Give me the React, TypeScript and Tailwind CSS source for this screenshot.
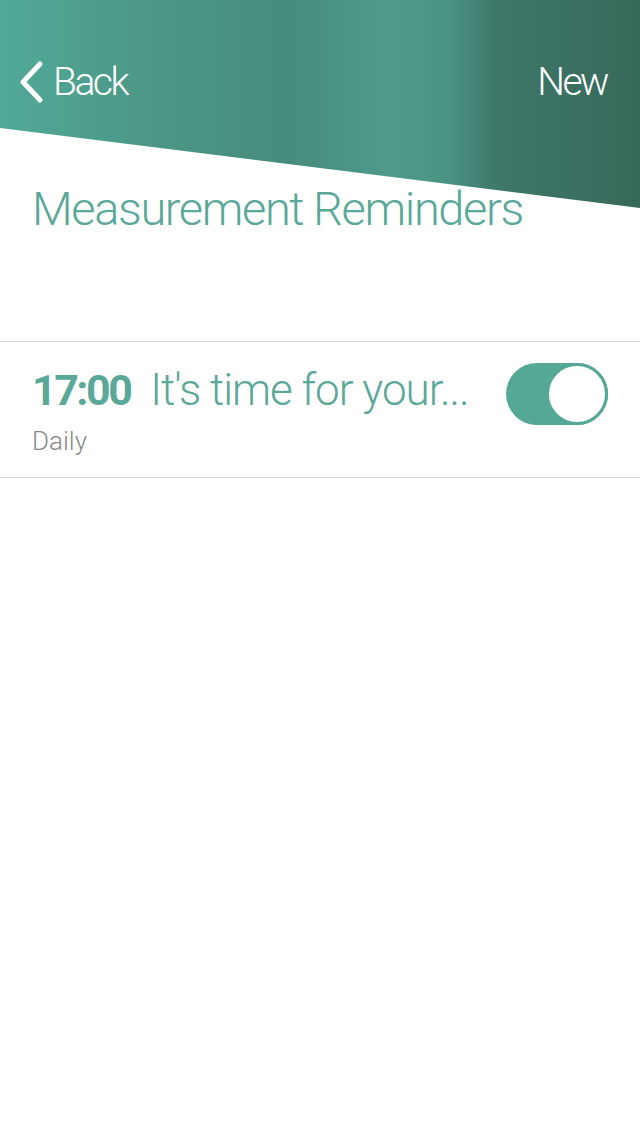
import React from "react";

const font = { fontFamily: "Roboto, 'Open Sans', sans-serif" };

function Toggle() {
  return (
    <div className="w-[102px] h-[62px] rounded-full bg-[#55a896] relative shrink-0">
      <div className="absolute right-0 top-0 w-[62px] h-[62px] rounded-full bg-white border-[3px] border-[#55a896]" />
    </div>
  );
}

export default function App() {
  return (
    <div className="relative w-full min-h-screen bg-white" style={font}>
      <div className="absolute top-0 left-0 w-full h-[208px] [clip-path:polygon(0_0,100%_0,100%_100%,0_61.5%)] bg-[linear-gradient(90deg,#52a998_0%,#4b9685_25%,#478b7c_45%,#4e9c8c_61%,#4a9282_70%,#3e7769_78%,#37695a_100%)]" />

      <div className="relative z-10 h-[164px] flex items-center justify-between pl-[18px] pr-[33px] text-white">
        <div className="flex items-center gap-[9px]">
          <svg width="26" height="44" viewBox="0 0 26 44" fill="none">
            <path d="M22 4 L5 22 L22 40" stroke="white" strokeWidth="5" strokeLinecap="round" strokeLinejoin="round" />
          </svg>
          <span className="text-[39px] font-light leading-none tracking-[-2.5px]">Back</span>
        </div>
        <span className="text-[39px] font-light leading-none tracking-[-2.5px]">New</span>
      </div>

      <h1 className="relative z-10 mt-[17px] px-[32px] text-[47px] font-light leading-[56px] text-[#5aa898] tracking-[-1.4px]">
        Measurement Reminders
      </h1>

      <div className="mt-[104px] border-y border-[#cfcfcf] h-[137px] flex items-start justify-between pl-[32px] pr-[32px] pt-[21px]">
        <div className="flex flex-col mt-[5px]">
          <div className="flex items-baseline gap-[20px] text-[#5aa898]">
            <span className="text-[43px] font-bold leading-none tracking-[-2.5px]">17:00</span>
            <span className="text-[44px] font-light leading-none tracking-[-1px]">It's time for your...</span>
          </div>
          <span className="mt-[16px] text-[26px] font-light text-[#8a8a8a] leading-none">Daily</span>
        </div>
        <Toggle />
      </div>
    </div>
  );
}
